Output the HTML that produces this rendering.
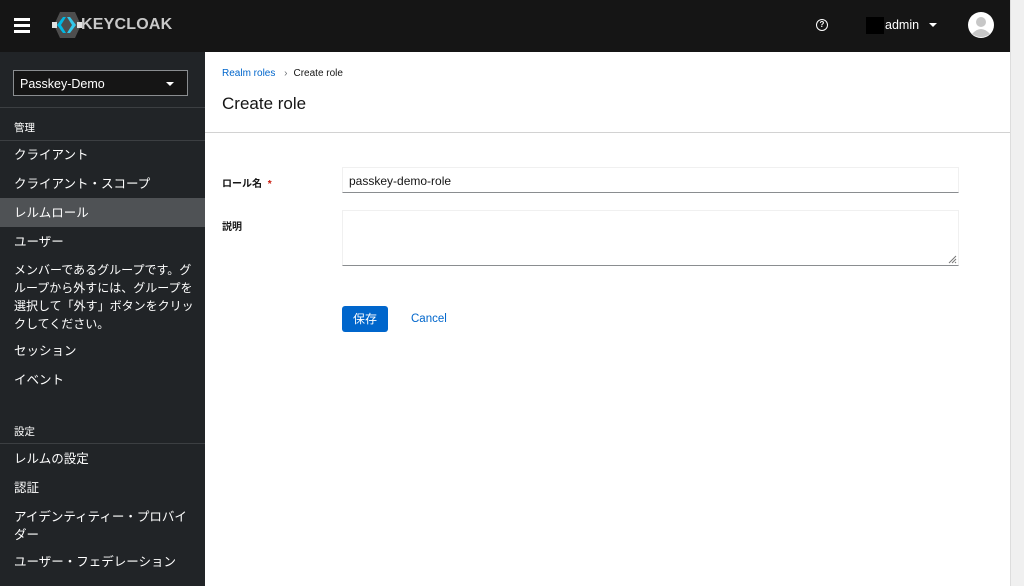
<!DOCTYPE html>
<html><head><meta charset="utf-8"><style>
*{box-sizing:border-box;margin:0;padding:0}
body{width:1024px;height:586px;overflow:hidden;font-family:"Liberation Sans","Noto Sans CJK JP",sans-serif;background:#fff;position:relative;font-size:12px}
.hdr{position:absolute;left:0;top:0;width:1010px;height:52px;background:#151515}
.side{position:absolute;left:0;top:52px;width:205px;height:534px;background:#212427;color:#fff}
.it{position:absolute;left:0;width:205px;padding-left:14px;font-size:12.5px;line-height:18px;white-space:nowrap}
.sec{position:absolute;left:0;width:205px;padding-left:14px;font-size:10.5px;color:#fff}
.ln{position:absolute;left:0;width:205px;height:1px;background:#3c3f42}
.sb{position:absolute;left:1010px;top:0;width:14px;height:586px;background:#f0f0f0;border-left:1px solid #ddd}
</style></head><body>
<div class="hdr">
 <div style="position:absolute;left:14px;top:18px;width:16px;height:3px;background:#fff;box-shadow:0 6px 0 #fff,0 12px 0 #fff"></div>
 <svg style="position:absolute;left:51px;top:11px" width="32" height="28" viewBox="0 0 32 28"><polygon points="9,1 24,1 30,14 24,27 9,27 3,14" fill="#4d4d4d"/><path d="M1 11 L6 11 L6 17 L1 17Z M26 11 L31 11 L31 17 L26 17Z" fill="#e0e0e0"/><path d="M12 6 L6 14 L12 22 L15 22 L10 14 L15 6Z" fill="#00b8e3"/><path d="M19 6 L25 14 L19 22 L16 22 L21 14 L16 6Z" fill="#33c6e9"/></svg>
 <div style="position:absolute;left:81px;top:16px;color:#c8c8c8;font-weight:bold;font-size:16px;letter-spacing:0.2px">KEYCLOAK</div>
 <div style="position:absolute;left:816px;top:19px;width:12px;height:12px;border:1.5px solid #fff;border-radius:50%;color:#fff;font-size:8px;font-weight:bold;text-align:center;line-height:9px">?</div>
 <div style="position:absolute;left:866px;top:17px;width:18px;height:17px;background:#000"></div>
 <div style="position:absolute;left:885px;top:18px;color:#fff;font-size:12.5px">admin</div>
 <div style="position:absolute;left:929px;top:23px;border-left:4px solid transparent;border-right:4px solid transparent;border-top:4px solid #fff"></div>
 <svg style="position:absolute;left:968px;top:12px" width="26" height="26" viewBox="0 0 26 26"><circle cx="13" cy="13" r="13" fill="#fff"/><circle cx="13" cy="10" r="5" fill="#c7c7c7"/><path d="M4 22 Q13 12 22 22 Q13 28 4 22Z" fill="#c7c7c7"/></svg>
</div>
<div class="side">
 <div style="position:absolute;left:13px;top:18px;width:175px;height:26px;background:#151515;border:1px solid #8a8d90;padding:6px 0 0 6px;font-size:12.5px">Passkey-Demo<span style="position:absolute;right:13px;top:11px;border-left:4px solid transparent;border-right:4px solid transparent;border-top:4px solid #fff"></span></div>
 <div class="ln" style="top:55px"></div>
 <div class="sec" style="top:68px">管理</div>
 <div class="ln" style="top:88px"></div>
 <div class="it" style="top:94px">クライアント</div>
 <div class="it" style="top:123px">クライアント・スコープ</div>
 <div class="it" style="top:146px;height:29px;background:#4f5255;padding-top:6px">レルムロール</div>
 <div class="it" style="top:181px">ユーザー</div>
 <div class="it" style="top:209px;font-size:12px">メンバーであるグループです。グ<br>ループから外すには、グループを<br>選択して「外す」ボタンをクリッ<br>クしてください。</div>
 <div class="it" style="top:290px">セッション</div>
 <div class="it" style="top:319px">イベント</div>
 <div class="sec" style="top:372px">設定</div>
 <div class="ln" style="top:391px"></div>
 <div class="it" style="top:398px">レルムの設定</div>
 <div class="it" style="top:427px">認証</div>
 <div class="it" style="top:456px">アイデンティティー・プロバイ<br>ダー</div>
 <div class="it" style="top:501px">ユーザー・フェデレーション</div>
</div>
<div style="position:absolute;left:222px;top:68px;font-size:10px;color:#06c">Realm roles <span style="color:#6a6e73;margin:0 6px">›</span><span style="color:#151515">Create role</span></div>
<div style="position:absolute;left:222px;top:94px;font-size:17px;color:#151515">Create role</div>
<div style="position:absolute;left:205px;top:132px;width:805px;height:1px;background:#d2d2d2"></div>
<div style="position:absolute;left:222px;top:175px;font-size:10px;font-weight:bold;color:#151515">ロール名 <span style="color:#c9190b;margin-left:3px">*</span></div>
<div style="position:absolute;left:342px;top:167px;width:617px;height:26px;border:1px solid #f0f0f0;border-bottom:1px solid #8a8d90;padding:6px 0 0 6px;font-size:12px;color:#151515">passkey-demo-role</div>
<div style="position:absolute;left:222px;top:218px;font-size:10px;font-weight:bold;color:#151515">説明</div>
<div style="position:absolute;left:342px;top:210px;width:617px;height:56px;border:1px solid #f0f0f0;border-bottom:1px solid #8a8d90"><svg style="position:absolute;right:1px;bottom:1px" width="9" height="9"><path d="M8 1 L1 8 M8 4 L4 8 M8 7 L7 8" stroke="#777" stroke-width="1"/></svg></div>
<div style="position:absolute;left:342px;top:306px;width:46px;height:26px;background:#06c;border-radius:3px;color:#fff;font-size:12px;text-align:center;line-height:26px">保存</div>
<div style="position:absolute;left:411px;top:313px;color:#06c;font-size:11.5px">Cancel</div>
<div class="sb"></div>
</body></html>
